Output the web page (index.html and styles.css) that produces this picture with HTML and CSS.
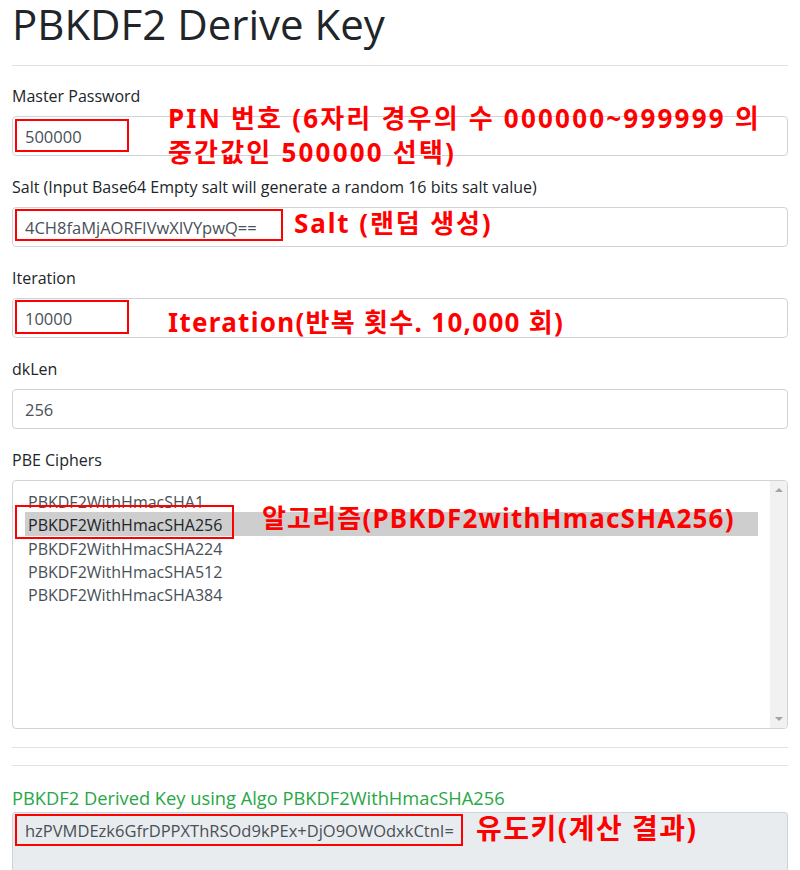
FILE: index.html
```html
<!DOCTYPE html>
<html lang="ko">
<head>
<meta charset="utf-8">
<title>PBKDF2 Derive Key</title>
<link rel="stylesheet" href="styles.css">
</head>
<body>
<div class="page">
  <h1 class="title">PBKDF2 Derive Key</h1>
  <hr class="rule rule-top">

  <div class="group">
    <label class="label">Master Password</label>
    <div class="field-wrap">
      <input class="input" type="text" value="500000" readonly>
      <span class="mark mark-pin"></span>
      <div class="note note-pin">PIN 번호 (6자리 경우의 수 000000~999999 의<br>중간값인 500000 선택)</div>
    </div>
  </div>

  <div class="group">
    <label class="label">Salt (Input Base64 Empty salt will generate a random 16 bits salt value)</label>
    <div class="field-wrap">
      <input class="input" type="text" value="4CH8faMjAORFIVwXlVYpwQ==" readonly>
      <span class="mark mark-salt"></span>
      <div class="note note-salt">Salt (랜덤 생성)</div>
    </div>
  </div>

  <div class="group">
    <label class="label">Iteration</label>
    <div class="field-wrap">
      <input class="input" type="text" value="10000" readonly>
      <span class="mark mark-iter"></span>
      <div class="note note-iter">Iteration(반복 횟수. 10,000 회)</div>
    </div>
  </div>

  <div class="group">
    <label class="label">dkLen</label>
    <div class="field-wrap">
      <input class="input" type="text" value="256" readonly>
    </div>
  </div>

  <div class="group group-last">
    <label class="label">PBE Ciphers</label>
    <div class="field-wrap">
      <div class="listbox">
        <ul class="options">
          <li class="option">PBKDF2WithHmacSHA1</li>
          <li class="option option-selected">PBKDF2WithHmacSHA256</li>
          <li class="option">PBKDF2WithHmacSHA224</li>
          <li class="option">PBKDF2WithHmacSHA512</li>
          <li class="option">PBKDF2WithHmacSHA384</li>
        </ul>
        <div class="scrollbar">
          <span class="arrow arrow-up"></span>
          <span class="arrow arrow-down"></span>
        </div>
      </div>
      <span class="mark mark-alg"></span>
      <div class="note note-alg">알고리즘(PBKDF2withHmacSHA256)</div>
    </div>
  </div>

  <hr class="rule rule-a">
  <hr class="rule rule-b">

  <div class="group group-result">
    <label class="label label-success">PBKDF2 Derived Key using Algo PBKDF2WithHmacSHA256</label>
    <div class="field-wrap">
      <textarea class="result" readonly>hzPVMDEzk6GfrDPPXThRSOd9kPEx+DjO9OWOdxkCtnI=</textarea>
      <span class="mark mark-result"></span>
      <div class="note note-result">유도키(계산 결과)</div>
    </div>
  </div>
</div>
</body>
</html>
```

FILE: styles.css
```css
html, body {
  margin: 0;
  padding: 0;
  background: #ffffff;
}

body {
  font-family: "Open Sans", "Noto Sans", "Noto Sans CJK KR", sans-serif;
  font-size: 16px;
  color: #212529;
}

.page {
  padding: 0 12px;
}

.title {
  margin: 0;
  font-size: 42px;
  line-height: 48px;
  font-weight: 400;
  color: #212529;
}

.rule {
  margin: 0;
  border: 0;
  border-top: 1px solid #e3e3e3;
  height: 0;
}

.rule-top {
  margin-top: 17px;
}

.group {
  margin-bottom: 19px;
}

.rule-top + .group {
  margin-top: 18px;
}

.group-last {
  margin-bottom: 0;
}

.group-result {
  margin-bottom: 0;
}

.label {
  display: block;
  line-height: 24px;
  margin-bottom: 8px;
  color: #212529;
}

.label-success {
  font-size: 18.3px;
  color: #28a745;
  margin-bottom: 2px;
}

.field-wrap {
  position: relative;
}

.input {
  display: block;
  box-sizing: border-box;
  width: 100%;
  height: 40px;
  margin: 0;
  padding: 0 12px;
  font: inherit;
  font-size: 16.5px;
  color: #495057;
  background: #ffffff;
  border: 1px solid #ced4da;
  border-radius: 4px;
  outline: none;
}

.listbox {
  box-sizing: border-box;
  height: 249px;
  display: flex;
  border: 1px solid #ced4da;
  border-radius: 4px;
  background: #fff;
  overflow: hidden;
}

.options {
  list-style: none;
  margin: 0;
  padding: 8px 12px 0 12px;
  flex: 1;
}

.option {
  box-sizing: border-box;
  height: 23.3px;
  line-height: 23px;
  padding: 2px 0 0 3px;
  color: #495057;
  white-space: nowrap;
}

.option-selected {
  background: #cecece;
  color: #212529;
}

.scrollbar {
  width: 17px;
  background: #f1f1f1;
  display: flex;
  flex-direction: column;
  justify-content: space-between;
  align-items: center;
  padding: 7px 0;
}

.arrow {
  width: 0;
  height: 0;
  border-left: 4px solid transparent;
  border-right: 4px solid transparent;
}

.arrow-up {
  border-bottom: 4px solid #a3a3a3;
}

.arrow-down {
  border-top: 4px solid #a3a3a3;
}

.rule-a {
  margin-top: 18px;
}

.rule-b {
  margin-top: 17px;
}

.rule-b + .group {
  margin-top: 20px;
}

.result {
  display: block;
  box-sizing: border-box;
  width: 100%;
  height: 58px;
  margin: 0;
  padding: 6px 12px;
  font: inherit;
  font-size: 16.5px;
  line-height: 24px;
  color: #495057;
  background: #e9ecef;
  border: 1px solid #ced4da;
  border-bottom: 0;
  border-radius: 4px 4px 0 0;
  resize: none;
  outline: none;
  overflow: hidden;
}

.mark {
  position: absolute;
  box-sizing: border-box;
  border: 2px solid #ff0000;
  left: 3px;
}

.mark-pin { top: 3px; width: 114px; height: 33px; }
.mark-salt { top: 2px; width: 268px; height: 32px; }
.mark-iter { top: 2px; width: 114px; height: 34px; }
.mark-alg { top: 25px; width: 219px; height: 34px; }
.mark-result { top: 2px; width: 448px; height: 32px; }

.note {
  position: absolute;
  font-family: "Noto Sans", "Noto Sans CJK KR", sans-serif;
  font-weight: 700;
  font-size: 26px;
  line-height: 29px;
  color: #ff0000;
  white-space: nowrap;
}

.note-pin {
  left: 156px;
  top: -15px;
  line-height: 34px;
  letter-spacing: 2.2px;
}

.note-salt {
  left: 282px;
  top: 2px;
  letter-spacing: 1.9px;
}

.note-iter {
  left: 156px;
  top: 10px;
  letter-spacing: 1.3px;
}

.note-alg {
  left: 250px;
  top: 24px;
  letter-spacing: 1.2px;
}

.note-result {
  left: 464px;
  top: 2px;
  font-size: 28px;
  letter-spacing: 1.5px;
}
```
